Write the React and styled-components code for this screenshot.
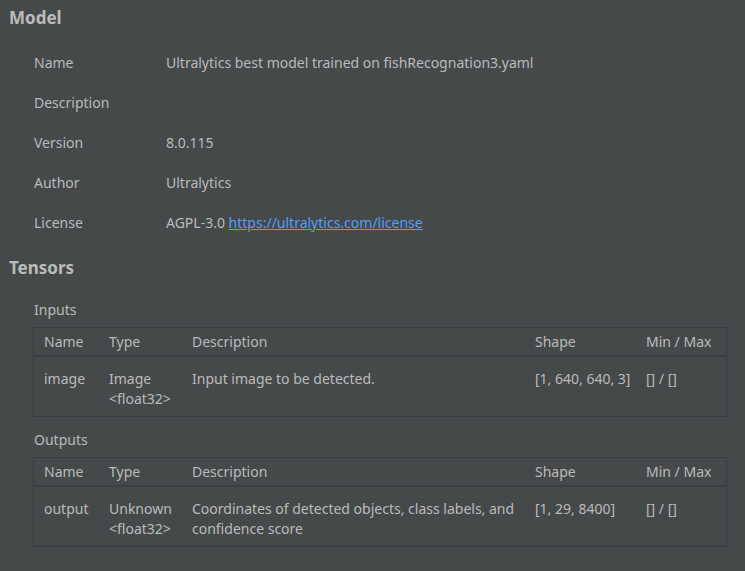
import React from 'react'
import { styled, createGlobalStyle } from 'styled-components'

const GlobalStyle = createGlobalStyle`
  html, body {
    margin: 0;
    padding: 0;
    background: #45494a;
  }
  body {
    font-family: "Noto Sans", "Open Sans", sans-serif;
    font-size: 14px;
    color: #bbbbbb;
  }
`

const metadata = [
  { label: 'Name', value: 'Ultralytics best model trained on fishRecognation3.yaml' },
  { label: 'Description', value: '' },
  { label: 'Version', value: '8.0.115' },
  { label: 'Author', value: 'Ultralytics' },
  { label: 'License', value: 'AGPL-3.0', link: 'https://ultralytics.com/license' },
]

const inputs = [
  { name: 'image', type: ['Image', '<float32>'], desc: ['Input image to be detected.'], shape: '[1, 640, 640, 3]', range: '[] / []' },
]

const outputs = [
  {
    name: 'output',
    type: ['Unknown', '<float32>'],
    desc: ['Coordinates of detected objects, class labels, and', 'confidence score'],
    shape: '[1, 29, 8400]',
    range: '[] / []',
  },
]

function TensorTable({ title, rows }) {
  return (
    <div>
      <GroupTitle>{title}</GroupTitle>
      <Table>
        <HeadRow>
          <Cell>Name</Cell>
          <Cell>Type</Cell>
          <Cell>Description</Cell>
          <Cell>Shape</Cell>
          <Cell>Min / Max</Cell>
        </HeadRow>
        {rows.map((r) => (
          <BodyRow key={r.name}>
            <Cell>{r.name}</Cell>
            <Cell>{r.type.map((t) => <Line key={t}>{t}</Line>)}</Cell>
            <Cell>{r.desc.map((t) => <Line key={t}>{t}</Line>)}</Cell>
            <Cell>{r.shape}</Cell>
            <Cell>{r.range}</Cell>
          </BodyRow>
        ))}
      </Table>
    </div>
  )
}

export default function App() {
  return (
    <Page>
      <GlobalStyle />
      <Heading>Model</Heading>
      <MetaList>
        {metadata.map((m) => (
          <MetaRow key={m.label}>
            <span>{m.label}</span>
            <span>
              {m.value}
              {m.link && (
                <>
                  {' '}
                  <Link href="#">{m.link}</Link>
                </>
              )}
            </span>
          </MetaRow>
        ))}
      </MetaList>
      <Heading $gap={20}>Tensors</Heading>
      <TensorSection>
        <TensorTable title="Inputs" rows={inputs} />
        <TensorTable title="Outputs" rows={outputs} />
      </TensorSection>
    </Page>
  )
}

const Page = styled.div`
  width: 745px;
  height: 571px;
  padding: 6px 18px 0 9px;
  box-sizing: border-box;
  overflow: hidden;
`

const Heading = styled.h2`
  margin: 0 0 ${(p) => p.$gap || 0}px;
  height: 24px;
  line-height: 24px;
  font-size: 17px;
  font-weight: 700;
  color: #bbbbbb;
`

const MetaList = styled.div`
  display: flex;
  flex-direction: column;
  padding: 23px 0 3px 25px;
`

const MetaRow = styled.div`
  display: grid;
  grid-template-columns: 132px 1fr;
  height: 40px;
  line-height: 20px;
  align-items: start;
`

const Link = styled.a`
  color: #589df6;
  text-decoration: underline;
`

const TensorSection = styled.div`
  display: flex;
  flex-direction: column;
  gap: 13px;
  padding-left: 25px;
`

const GroupTitle = styled.div`
  height: 20px;
  line-height: 20px;
  margin-bottom: 7px;
`

const Table = styled.div`
  border: 1px solid #3b3e40;
  margin-left: -1px;
  display: grid;
  grid-template-columns: 75px 83px 343px 111px 1fr;
`

const HeadRow = styled.div`
  display: contents;
  & > * {
    height: 27px;
    line-height: 27px;
    border-bottom: 2px solid #3b3e40;
  }
`

const BodyRow = styled.div`
  display: contents;
  & > * {
    padding-top: 12px;
    height: 59px;
    box-sizing: border-box;
    line-height: 20px;
  }
`

const Cell = styled.div`
  white-space: nowrap;
  &:first-child {
    padding-left: 10px;
  }
`

const Line = styled.div``
